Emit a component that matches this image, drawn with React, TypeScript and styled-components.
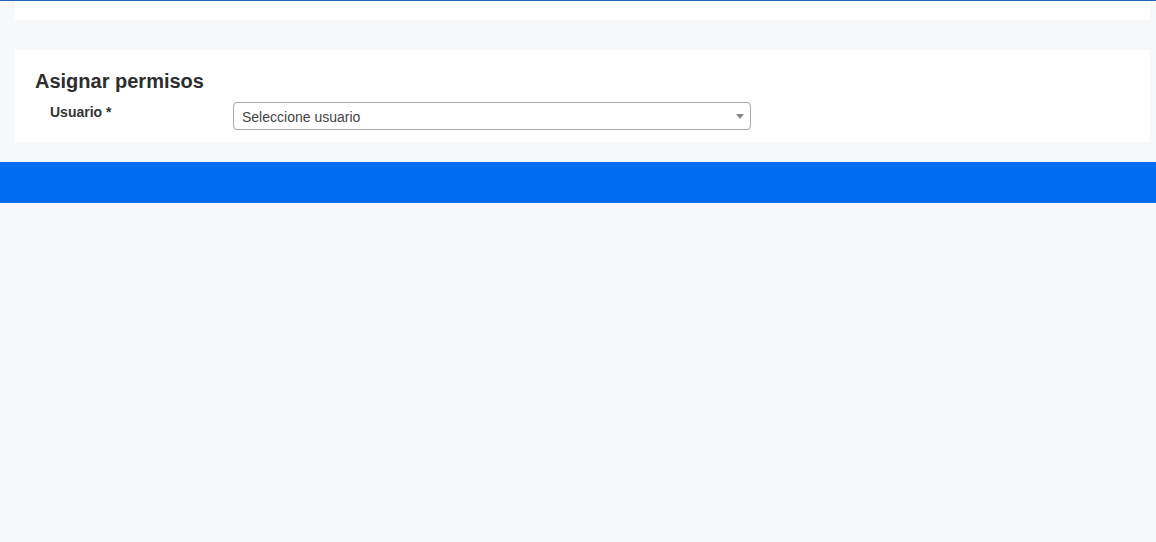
import React from "react";
import styled, { createGlobalStyle } from "styled-components";

const Global = createGlobalStyle`
  html, body { margin: 0; padding: 0; background: #f7f8fa; }
  body { font-family: "Liberation Sans", Arial, sans-serif; color: #333; }
`;

const Page = styled.div`
  display: flex;
  flex-direction: column;
  min-height: 542px;
  background: #f7f8fa;
`;

const TopLine = styled.div`
  height: 1px;
  background: #2266b5;
`;

const Content = styled.div`
  display: flex;
  flex-direction: column;
  gap: 30px;
  padding: 0 6px 20px 15px;
`;

const Card = styled.div<{ $h?: number }>`
  background: #fff;
  ${(p) => (p.$h ? `height: ${p.$h}px;` : "")}
`;

const FormCard = styled(Card)`
  padding: 20px 20px 12px 20px;
`;

const Title = styled.h3`
  margin: 0;
  font-size: 20px;
  line-height: 22px;
  font-weight: bold;
  color: #2d2d2d;
`;

const Row = styled.div`
  display: grid;
  grid-template-columns: 183px 518px;
  margin-top: 10px;
  padding-left: 15px;
`;

const Label = styled.label`
  font-size: 14px;
  line-height: 16px;
  font-weight: bold;
  padding-top: 2px;
  color: #333;
`;

const Select = styled.div`
  position: relative;
  height: 25px;
  padding-top: 1px;
  border: 1px solid #aaa;
  border-radius: 4px;
  padding-left: 8px;
  font-size: 14px;
  line-height: 26px;
  color: #444;
  background: #fff;
`;

const Arrow = styled.span`
  position: absolute;
  right: 6px;
  top: 11px;
  width: 0;
  height: 0;
  border-left: 4px solid transparent;
  border-right: 4px solid transparent;
  border-top: 5px solid #888;
`;

const Footer = styled.div`
  height: 41px;
  background: #006df0;
`;

export default function App() {
  return (
    <Page>
      <Global />
      <TopLine />
      <Content>
        <Card $h={19} />
        <FormCard>
          <Title>Asignar permisos</Title>
          <Row>
            <Label>Usuario *</Label>
            <Select>
              Seleccione usuario
              <Arrow />
            </Select>
          </Row>
        </FormCard>
      </Content>
      <Footer />
    </Page>
  );
}
